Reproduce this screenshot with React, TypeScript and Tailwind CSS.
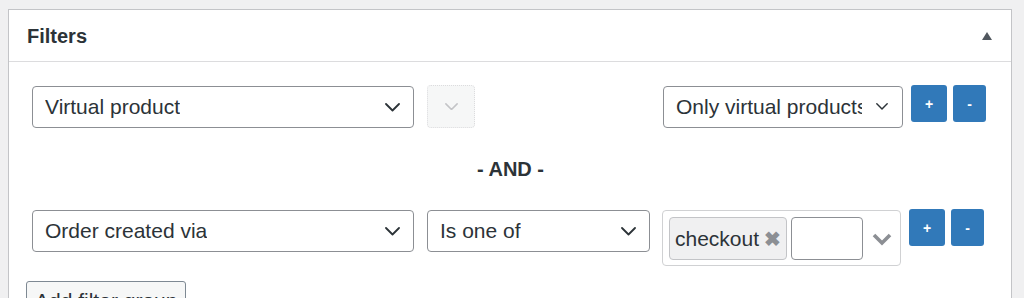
import React from 'react'

const font = { fontFamily: '"Liberation Sans", Arial, sans-serif' }

const Chevron: React.FC<{ className?: string; width?: number }> = ({ className, width = 15 }) => (
  <svg width={width} height={width * 0.6} viewBox="0 0 15 9" fill="none" className={className}>
    <polyline points="1,1 7.5,7.5 14,1" stroke="currentColor" strokeWidth="1.8" strokeLinecap="round" strokeLinejoin="round" />
  </svg>
)

const Select: React.FC<{ label: string; width: string }> = ({ label, width }) => (
  <div className={`${width} h-[42px] shrink-0 rounded-[4px] border border-[#8c8f94] bg-white pl-[12px] pr-[13px] flex items-center justify-between text-[#2c3338]`}>
    <span className="truncate">{label}</span>
    <Chevron className="shrink-0 text-[#2c3338]" />
  </div>
)

const PlusMinus: React.FC = () => (
  <div className="flex gap-[6px] ml-[8px]">
    <button className="w-[36px] h-[37px] rounded-[3px] bg-[#3179b9] text-white text-[14px] font-bold leading-none">+</button>
    <button className="w-[33px] h-[37px] rounded-[3px] bg-[#3179b9] text-white text-[14px] font-bold leading-none">-</button>
  </div>
)

export default function App() {
  return (
    <div className="w-[1024px] h-[298px] overflow-hidden bg-[#f0f0f1] pl-[8px] pt-[9px] text-[21px] text-[#2c3338]" style={font}>
      <div className="w-[1004px] h-[400px] border border-[#c3c4c7] bg-white">
        {/* header */}
        <div className="h-[52px] border-b border-[#dcdcde] pl-[18px] pr-[19px] flex items-center justify-between">
          <h2 className="font-bold text-[20px] leading-none">Filters</h2>
          <span className="block w-0 h-0 border-l-[5px] border-r-[5px] border-b-[8px] border-l-transparent border-r-transparent border-b-[#50575e]" />
        </div>

        {/* body */}
        <div className="pt-[24px] pl-[17px]">
          <div className="ml-[6px] flex items-start">
            <Select label="Virtual product" width="w-[382px]" />
            <div className="ml-[13px] w-[48px] h-[43px] -mt-px rounded-[4px] border border-dotted border-[#dcdcde] bg-[#f6f7f7] flex items-center justify-center">
              <Chevron className="text-[#c3c4c7]" width={13} />
            </div>
            <div className="ml-[188px] w-[240px] h-[42px] shrink-0 rounded-[4px] border border-[#8c8f94] bg-white pl-[12px] pr-[13px] flex items-center">
              <span className="w-[186px] overflow-hidden whitespace-nowrap">Only virtual products</span>
              <Chevron className="ml-[14px] shrink-0" width={12} />
            </div>
            <div className="-mt-px">
              <PlusMinus />
            </div>
          </div>

          <div className="h-[81px] flex items-center justify-center font-bold text-[20px] pr-[16px]">
            - AND -
          </div>

          <div className="ml-[6px] flex items-start">
            <div className="mt-px flex">
              <Select label="Order created via" width="w-[382px]" />
              <div className="ml-[13px]">
                <Select label="Is one of" width="w-[223px]" />
              </div>
            </div>
            <div className="ml-[12px] mt-px w-[239px] h-[56px] rounded-[4px] border border-[#d0d1d3] bg-white pl-[6px] pt-[6px] flex items-start">
              <div className="h-[43px] rounded-[4px] border border-[#c3c4c7] bg-[#f0f0f1] pl-[5px] pr-[5px] flex items-center">
                <span>checkout</span>
                <span className="ml-[5px] text-[#8c8f94] font-bold text-[20px] leading-none">&#x2716;&#xFE0E;</span>
              </div>
              <div className="ml-[4px] w-[72px] h-[43px] rounded-[4px] border border-[#8c8f94] bg-white" />
              <svg width="20" height="13" viewBox="0 0 20 13" className="ml-[9px] mt-[16px] text-[#8c8f94]">
                <polyline points="2,2 10,10 18,2" fill="none" stroke="currentColor" strokeWidth="3.6" strokeLinejoin="miter" />
              </svg>
            </div>
            <PlusMinus />
          </div>

          <div className="mt-[15px]">
            <button className="h-[36px] rounded-[3px] border border-[#7e8993] bg-[#f6f7f7] px-[8px] pt-[3px] text-[21px] text-[#2c3338] leading-none" style={font}>
              Add filter group
            </button>
          </div>
        </div>
      </div>
    </div>
  )
}
